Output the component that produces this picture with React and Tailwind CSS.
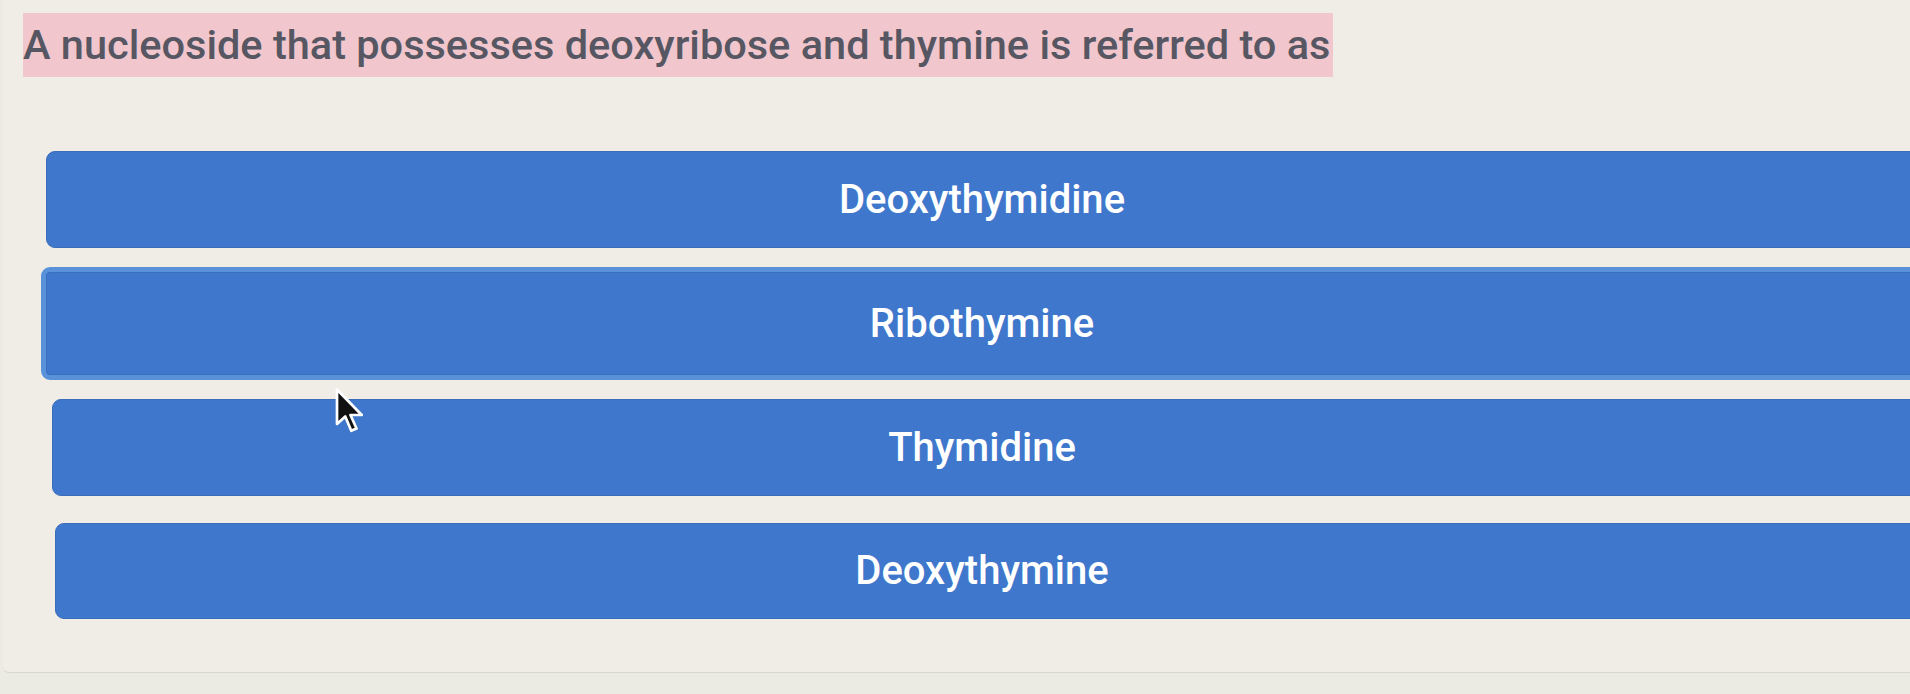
const options = [
  { label: 'Deoxythymidine', box: 'ml-[43px] w-[1980px] h-[97px] mt-[79px]', active: false },
  { label: 'Ribothymine', box: 'ml-[38px] w-[1990px] h-[113px] mt-[19px]', active: true },
  { label: 'Thymidine', box: 'ml-[49px] w-[1968px] h-[97px] mt-[19px]', active: false },
  { label: 'Deoxythymine', box: 'ml-[52px] w-[1962px] h-[96px] mt-[27px]', active: false },
];

const Cursor = () => (
  <svg
    className="absolute left-[334px] top-[388px] w-[36px] h-[48px]"
    viewBox="0 0 24 32"
  >
    <path
      d="M2 1 L2 24 L7.5 19 L11.5 28.5 L15 27 L11 18 L18.5 18 Z"
      fill="#111"
      stroke="#fff"
      strokeWidth="1.8"
      strokeLinejoin="round"
    />
  </svg>
);

const App = () => {
  return (
    <div
      className="relative w-[1910px] h-[694px] overflow-hidden bg-[#ecebe3]"
      style={{ fontFamily: 'Roboto, "Liberation Sans", sans-serif' }}
    >
      <div className="ml-[3px] w-[1907px] h-[673px] bg-[#efede6] border-b border-[#d9d6cc] rounded-bl-md overflow-hidden">
        <div className="pt-[13px] pl-[20px]">
          <h1 className="inline-block h-[64px] leading-[64px] pr-[3px] bg-[#f1c6cc] text-[#575763] text-[41.5px] font-medium whitespace-nowrap">
            A nucleoside that possesses deoxyribose and thymine is referred to as
          </h1>
        </div>

        <div className="flex flex-col -mt-[5px]">
          {options.map((opt) => (
            <button
              key={opt.label}
              className={`${opt.box} shrink-0 flex items-center justify-center pr-[108px] rounded-[9px] bg-[#3e77cb] text-white text-[40px] font-medium ${
                opt.active
                  ? 'border-[5px] border-[#5a92da] shadow-[inset_0_0_0_1px_#3a6fc0]'
                  : 'border border-[#3a6cba]'
              }`}
            >
              {opt.label}
            </button>
          ))}
        </div>
      </div>
      <Cursor />
    </div>
  );
};

export default App;
